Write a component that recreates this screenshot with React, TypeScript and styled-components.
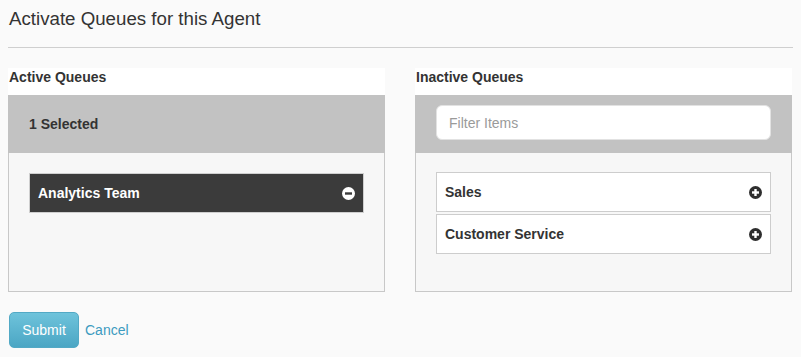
import styled, { createGlobalStyle } from 'styled-components';

// ---------- global ----------
const GlobalStyle = createGlobalStyle`
  html, body { background: #fafafa; }
  body {
    margin: 0;
    padding: 9px 8px 0 8px;
    font-family: "Liberation Sans", Arial, sans-serif;
    color: #333;
  }
  * { box-sizing: border-box; }
`;

// ---------- styled ----------
const Title = styled.h3`
  margin: 0;
  padding-left: 1px;
  font-size: 18.7px;
  line-height: 20px;
  font-weight: 400;
  color: #333;
`;
const Rule = styled.hr`
  margin: 18px 0 20px;
  border: none;
  border-top: 1px solid #cfcfcf;
  width: 785px;
`;
const Columns = styled.div`
  display: grid;
  grid-template-columns: 377px 377px;
  gap: 30px;
`;
const Column = styled.section`
  background: #fff;
  display: flex;
  flex-direction: column;
`;
const Label = styled.div`
  font-size: 14px;
  line-height: 16px;
  font-weight: 700;
  margin-top: 1px;
  margin-bottom: 10px;
  padding-left: 1px;
  color: #333;
`;
const Panel = styled.div`
  border: 1px solid #c8c8c8;
  border-top: none;
`;
const PanelHead = styled.div`
  background: #c2c2c2;
  height: 58px;
  display: flex;
  align-items: center;
  padding: 0 21px;
  font-size: 14px;
  font-weight: 700;
  line-height: 20px;
  color: #333;
  margin: 0 -1px;
`;
const Filter = styled.input`
  width: 100%;
  height: 35px;
  margin-top: -3px;
  border: 1px solid #e2e2e2;
  border-radius: 6px;
  background: #fff;
  padding: 0 12px;
  font-family: inherit;
  font-size: 14px;
  color: #333;
  outline: none;
  &::placeholder { color: #9a9a9a; }
`;
const PanelBody = styled.div<{ $top: number }>`
  background: #f7f7f7;
  height: 138px;
  padding: ${({ $top }) => $top}px 20px 0;
  display: flex;
  flex-direction: column;
  gap: 2px;
`;
const Item = styled.div<{ $active?: boolean }>`
  height: 40px;
  display: flex;
  align-items: center;
  justify-content: space-between;
  padding: 0 8px;
  font-size: 14px;
  font-weight: 700;
  background: ${({ $active }) => ($active ? '#3b3b3b' : '#fff')};
  color: ${({ $active }) => ($active ? '#fff' : '#333')};
  border: 1px solid ${({ $active }) => ($active ? '#cfcfcf' : '#cdcdcd')};
  svg { display: block; }
`;
const Actions = styled.div`
  display: flex;
  align-items: center;
  gap: 6px;
  margin-top: 20px;
  padding-left: 1px;
`;
const Submit = styled.button`
  height: 36px;
  width: 70px;
  border: 1px solid #52a9c5;
  border-radius: 5px;
  background: linear-gradient(#6ec3db, #4ba6c4);
  color: #fff;
  font-family: inherit;
  font-size: 14px;
  cursor: pointer;
`;
const Cancel = styled.a`
  color: #3d9bc0;
  font-size: 14px;
  text-decoration: none;
  cursor: pointer;
`;

// ---------- icons ----------
const MinusCircle = () => (
  <svg width="13" height="13" viewBox="0 0 13 13">
    <circle cx="6.5" cy="6.5" r="6.5" fill="#fff" />
    <rect x="3" y="5.3" width="7" height="2.4" fill="#3b3b3b" />
  </svg>
);
const PlusCircle = () => (
  <svg width="13" height="13" viewBox="0 0 13 13">
    <circle cx="6.5" cy="6.5" r="6.5" fill="#2e2e2e" />
    <rect x="3" y="5.3" width="7" height="2.4" fill="#fff" />
    <rect x="5.3" y="3" width="2.4" height="7" fill="#fff" />
  </svg>
);

export default function App() {
  const inactive = ['Sales', 'Customer Service'];
  return (
    <>
      <GlobalStyle />
      <Title>Activate Queues for this Agent</Title>
      <Rule />
      <Columns>
        <Column>
          <Label>Active Queues</Label>
          <Panel>
            <PanelHead>1 Selected</PanelHead>
            <PanelBody $top={20}>
              <Item $active>
                <span>Analytics Team</span>
                <MinusCircle />
              </Item>
            </PanelBody>
          </Panel>
        </Column>
        <Column>
          <Label>Inactive Queues</Label>
          <Panel>
            <PanelHead>
              <Filter placeholder="Filter Items" />
            </PanelHead>
            <PanelBody $top={19}>
              {inactive.map(q => (
                <Item key={q}>
                  <span>{q}</span>
                  <PlusCircle />
                </Item>
              ))}
            </PanelBody>
          </Panel>
        </Column>
      </Columns>
      <Actions>
        <Submit>Submit</Submit>
        <Cancel>Cancel</Cancel>
      </Actions>
    </>
  );
}
